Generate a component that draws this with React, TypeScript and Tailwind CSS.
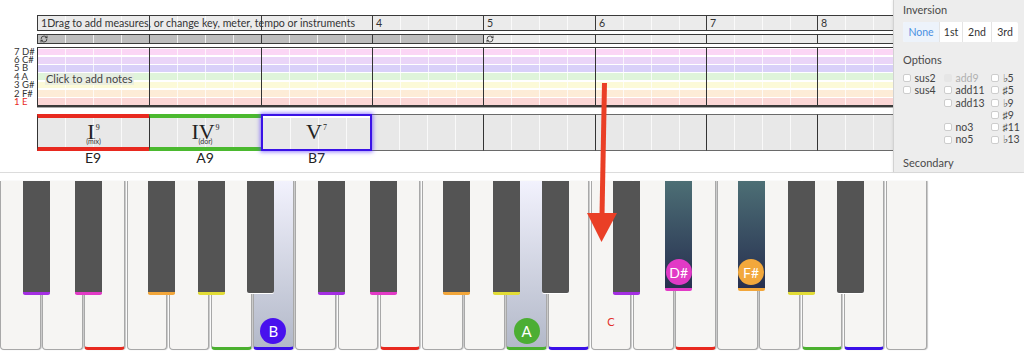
import { RefreshCw } from "lucide-react";

// measure boundaries in the score: 37,149,261,372,483,595,706,817,893
const measureWidths = [
  "w-[112px]",
  "w-[112px]",
  "w-[111px]",
  "w-[111px]",
  "w-[112px]",
  "w-[111px]",
  "w-[111px]",
  "w-[76px]",
];

const BEATS =
  "bg-[image:repeating-linear-gradient(90deg,transparent_0_27px,rgba(255,255,255,0.75)_27px_28px)]";

type NoteRow = { label: string; bg: string; red?: boolean };

const noteRows: NoteRow[] = [
  { label: "7 D#", bg: "bg-[#fbd6f5]" },
  { label: "6 C#", bg: "bg-[#ead5f8]" },
  { label: "5 B", bg: "bg-[#d9d0f9]" },
  { label: "4 A", bg: "bg-[#dff4da]" },
  { label: "3 G#", bg: "bg-[#fcfad8]" },
  { label: "2 F#", bg: "bg-[#fdecd7]" },
  { label: "1 E", bg: "bg-[#fbd7d6]", red: true },
];

type Chord = {
  numeral: string;
  sup: string;
  mode?: string;
  name: string;
  cell: string;
};

const chords: Chord[] = [
  {
    numeral: "I",
    sup: "9",
    mode: "(mix)",
    name: "E9",
    cell: "border-l border-l-[#333] border-y-4 border-y-[#e8291f] pt-[3px]",
  },
  {
    numeral: "IV",
    sup: "9",
    mode: "(dor)",
    name: "A9",
    cell: "border-l border-l-[#333] border-y-4 border-y-[#4bb92f] pt-[3px]",
  },
  {
    numeral: "V",
    sup: "7",
    name: "B7",
    cell: "relative z-10 border-2 border-[#3a12e6] pb-[2px] shadow-[inset_0_2px_0_#fff,0_0_4px_1px_rgba(90,60,255,0.65)]",
  },
];

const optionRows: (string | null)[][] = [
  ["sus2", "add9", "♭5"],
  ["sus4", "add11", "♯5"],
  [null, "add13", "♭9"],
  [null, null, "♯9"],
  [null, "no3", "♯11"],
  [null, "no5", "♭13"],
];

type WhiteKey = {
  strip?: string;
  hl?: boolean;
  badge?: { text: string; bg: string };
  label?: string;
};

const stripFor: Record<string, string> = {
  E: "border-b-[3px] border-b-[#e8291f]",
  A: "border-b-[3px] border-b-[#4bb02f]",
  B: "border-b-[3px] border-b-[#3a10e8]",
};

const whiteKeys: WhiteKey[] = Array.from({ length: 22 }, (_, i) => {
  const note = "CDEFGAB"[i % 7];
  const key: WhiteKey = { strip: stripFor[note] };
  if (i === 6) {
    key.hl = true;
    key.badge = { text: "B", bg: "bg-[#4811ee]" };
  }
  if (i === 12) {
    key.hl = true;
    key.badge = { text: "A", bg: "bg-[#4cae33]" };
  }
  if (i === 14) key.label = "C";
  return key;
});

type BlackKey = {
  center: number;
  strip?: string;
  badge?: { text: string; bg: string };
};

const PITCH = 42.14;
const blackKeys: BlackKey[] = [0, 1, 2].flatMap((o) => {
  const b = (k: number) => (k + 7 * o) * PITCH - 1;
  const keys: BlackKey[] = [
    { center: b(1) - 4.5, strip: "border-b-[3px] border-b-[#a42ee2]" },
    { center: b(2) + 5.5, strip: "border-b-[3px] border-b-[#e23ac6]" },
    { center: b(4) - 6.5, strip: "border-b-[3px] border-b-[#f2a63a]" },
    { center: b(5) + 2, strip: "border-b-[3px] border-b-[#e2dc36]" },
    { center: b(6) + 8.5 },
  ];
  if (o === 2) {
    keys[1].badge = { text: "D#", bg: "bg-[#e23ac6]" };
    keys[2].badge = { text: "F#", bg: "bg-[#f2a83c]" };
  }
  return keys;
});

function Checkbox({ disabled }: { disabled?: boolean }) {
  return (
    <span
      className={`h-[8px] w-[8px] shrink-0 rounded-[2px] ${
        disabled ? "bg-[#e6e6e6]" : "border border-[#cdcdcd] bg-white"
      }`}
    />
  );
}

function Score() {
  return (
    <section className="w-[893px] shrink-0">
      {/* measure header */}
      <div className="ml-[37px] mt-[15px] flex h-[16px] border-y border-[#3a3a3a] bg-[#ebebeb] text-[10.6px] leading-[14px] text-[#333]">
        {measureWidths.map((w, i) => (
          <div
            key={i}
            className={`${w} shrink-0 whitespace-nowrap border-l border-[#3a3a3a] pl-[3px] ${BEATS} ${
              i === 0 ? "relative z-10" : ""
            }`}
          >
            {i === 0
              ? "1Drag to add measures, or change key, meter, tempo or instruments"
              : i >= 3
                ? i + 1
                : ""}
          </div>
        ))}
      </div>

      {/* loop row */}
      <div className="ml-[37px] mt-[3px] flex h-[10px] border-y border-[#3a3a3a]">
        {measureWidths.map((w, i) => (
          <div
            key={i}
            className={`${w} flex shrink-0 items-center border-l border-[#3a3a3a] pl-[2px] text-[#333] ${
              i < 4 ? "bg-[#bdbdbd]" : "bg-[#ebebeb]"
            } ${BEATS}`}
          >
            {(i === 0 || i === 4) && <RefreshCw size={8} strokeWidth={2.5} />}
          </div>
        ))}
      </div>

      {/* notes */}
      <div className="mt-[3px] flex">
        <div className="w-[37px] shrink-0 pl-[14px] pt-[0.5px] text-[9.5px] leading-[8.45px] text-[#333]">
          {noteRows.map((r) => (
            <div key={r.label} className={`whitespace-nowrap ${r.red ? "text-[#e8291f]" : ""}`}>
              {r.label}
            </div>
          ))}
        </div>
        <div className="relative flex h-[60px] border-t border-b-2 border-[#3a3a3a] shadow-[0_1px_0_#aaa]">
          {measureWidths.map((w, i) => (
            <div
              key={i}
              className={`${w} flex shrink-0 flex-col gap-[1.5px] border-l-[1.5px] border-[#333] bg-white pt-[0.5px]`}
            >
              {noteRows.map((r) => (
                <div key={r.label} className={`flex-1 ${r.bg} ${BEATS}`} />
              ))}
            </div>
          ))}
          <span className="absolute left-[8px] top-[25px] bg-[#e6eae3]/70 px-[1px] text-[11px] leading-[12px] text-[#444]">
            Click to add notes
          </span>
        </div>
      </div>

      {/* chords */}
      <div className="ml-[37px] mt-[7px] flex h-[37px]">
        {measureWidths.map((w, i) => {
          const c = chords[i];
          return (
            <div
              key={i}
              className={`${w} flex shrink-0 flex-col items-center justify-center bg-[#e8e8e8] ${BEATS} ${
                c ? c.cell : "border-y border-y-[#6a6a6a] border-l border-l-[#333]"
              } ${i === 3 ? "border-l-0" : ""}`}
            >
              {c && (
                <>
                  <div className="flex items-start font-['Liberation_Serif',serif] text-[22px] leading-[16px] text-[#222]">
                    {c.numeral}
                    <span className="ml-[1px] mt-[0px] text-[8px] leading-[8px]">{c.sup}</span>
                  </div>
                  {c.mode && (
                    <div className="mt-[-2px] text-[7px] leading-[7px] text-[#333]">{c.mode}</div>
                  )}
                </>
              )}
            </div>
          );
        })}
      </div>
      <div className="ml-[37px] flex text-center text-[14px] leading-[14px] text-[#222]">
        {measureWidths.map((w, i) => (
          <div key={i} className={`${w} shrink-0`}>
            {chords[i]?.name ?? ""}
          </div>
        ))}
      </div>
    </section>
  );
}

function ChordPanel() {
  return (
    <aside className="w-[131px] shrink-0 border-l border-[#d2d2d2] bg-[#ededed] pl-[9px] text-[#4a4a4a] shadow-[-1px_0_2px_rgba(0,0,0,0.06)]">
      <div className="pt-[3px] text-[11px] leading-[13px]">Inversion</div>
      <div className="mt-[6px] flex h-[20px] w-[115px] overflow-hidden rounded-[2px] bg-white text-[10.5px] leading-[20px] text-[#333]">
        <span className="w-[36px] bg-[#edf3fb] text-center text-[#4a90e2]">None</span>
        <span className="w-[23px] border-l border-[#e4e4e4] text-center">1st</span>
        <span className="w-[29px] border-l border-[#e4e4e4] text-center">2nd</span>
        <span className="flex-1 border-l border-[#e4e4e4] text-center">3rd</span>
      </div>
      <div className="mt-[11px] text-[11px] leading-[13px]">Options</div>
      <div className="mt-[6px] grid grid-cols-[41px_47px_1fr] text-[10.5px] leading-[12.3px] text-[#444]">
        {optionRows.flatMap((row, r) =>
          row.map((opt, c) => (
            <div key={`${r}-${c}`} className="flex h-[12.3px] items-center gap-[3.5px]">
              {opt && (
                <>
                  <Checkbox disabled={opt === "add9"} />
                  <span className={opt === "add9" ? "text-[#b0b0b0]" : ""}>{opt}</span>
                </>
              )}
            </div>
          )),
        )}
      </div>
      <div className="mt-[10px] text-[11px] leading-[13px]">Secondary</div>
    </aside>
  );
}

function Piano() {
  return (
    <div className="relative mt-[8px] h-[170px]">
      <div className="flex gap-[1.5px]">
        {whiteKeys.map((k, i) => (
          <div
            key={i}
            className={`flex h-[169px] w-[40.7px] shrink-0 flex-col items-center justify-end rounded-b-[4px] border border-t-0 border-[#a8a8a8] shadow-[1px_0_1px_#c6c6c6] ${
              k.hl ? "bg-linear-to-b from-[#f2f2fd] to-[#b3b9c9]" : "bg-[#f6f5f3]"
            } ${k.strip ?? ""}`}
          >
            {k.badge && (
              <span
                className={`mb-[3px] flex h-[26px] w-[26px] items-center justify-center rounded-full text-[15px] text-white ${k.badge.bg}`}
              >
                {k.badge.text}
              </span>
            )}
            {k.label && (
              <span className="mb-[21px] text-[11px] leading-[12px] text-[#e3302a]">{k.label}</span>
            )}
          </div>
        ))}
      </div>
      {blackKeys.map((k, i) => (
        <div
          key={i}
          className={`absolute top-0 flex w-[27px] flex-col items-center justify-end rounded-b-[2px] ${
            k.badge
              ? "h-[110px] bg-linear-to-b from-[#4d6f75] to-[#272f4f]"
              : k.strip
                ? "h-[114px] bg-[#545454]"
                : "h-[112px] bg-[#545454] shadow-[0_1px_0_#fff]"
          } ${k.strip ?? ""}`}
          style={{ left: k.center - 13.5 }}
        >
          {k.badge && (
            <span
              className={`mb-[3px] flex h-[26px] w-[26px] items-center justify-center rounded-full text-[14px] text-white ${k.badge.bg}`}
            >
              {k.badge.text}
            </span>
          )}
        </div>
      ))}
    </div>
  );
}

export default function App() {
  return (
    <div className="relative h-[364px] w-[1024px] overflow-hidden bg-white font-[Lato,'Liberation_Sans',sans-serif]">
      <div className="flex h-[173px] border-b border-[#dcdcdc]">
        <Score />
        <ChordPanel />
      </div>
      <Piano />
      <svg
        className="pointer-events-none absolute left-[585px] top-[80px]"
        width="36"
        height="165"
        viewBox="585 80 36 165"
      >
        <polygon points="602,83 607,83 604.5,215 599.5,215" fill="#ea3f26" />
        <polygon points="587,213 617,213 601.5,242" fill="#ea3f26" />
      </svg>
    </div>
  );
}
